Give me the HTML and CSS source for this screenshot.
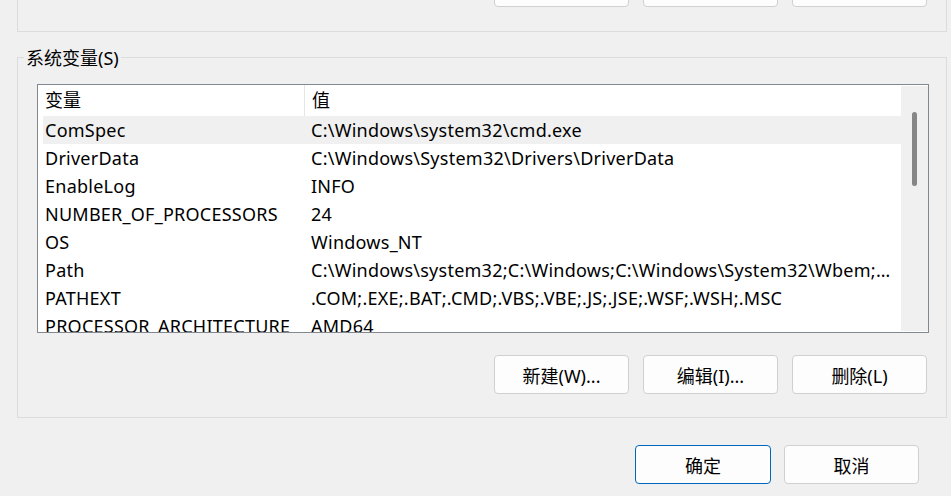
FILE: index.html
```html
<!DOCTYPE html>
<html lang="zh-CN">
<head>
    <meta charset="UTF-8">
    <title>环境变量</title>
    <link rel="stylesheet" href="styles.css">
</head>
<body>
    <div class="group group-user">
        <div class="group-buttons">
            <button class="btn">新建(N)...</button>
            <button class="btn">编辑(E)...</button>
            <button class="btn">删除(D)</button>
        </div>
    </div>

    <div class="group group-system">
        <div class="legend">系统变量(S)</div>
        <div class="listview">
            <div class="list-body">
                <div class="list-header">
                    <div class="col col-name">变量</div>
                    <div class="col col-value">值</div>
                </div>
                <div class="row selected">
                    <div class="cell cell-name">ComSpec</div>
                    <div class="cell cell-value">C:\Windows\system32\cmd.exe</div>
                </div>
                <div class="row">
                    <div class="cell cell-name">DriverData</div>
                    <div class="cell cell-value">C:\Windows\System32\Drivers\DriverData</div>
                </div>
                <div class="row">
                    <div class="cell cell-name">EnableLog</div>
                    <div class="cell cell-value">INFO</div>
                </div>
                <div class="row">
                    <div class="cell cell-name">NUMBER_OF_PROCESSORS</div>
                    <div class="cell cell-value">24</div>
                </div>
                <div class="row">
                    <div class="cell cell-name">OS</div>
                    <div class="cell cell-value">Windows_NT</div>
                </div>
                <div class="row">
                    <div class="cell cell-name">Path</div>
                    <div class="cell cell-value">C:\Windows\system32;C:\Windows;C:\Windows\System32\Wbem;C:\Windows\System32\WindowsPowerShell\v1.0\</div>
                </div>
                <div class="row">
                    <div class="cell cell-name">PATHEXT</div>
                    <div class="cell cell-value">.COM;.EXE;.BAT;.CMD;.VBS;.VBE;.JS;.JSE;.WSF;.WSH;.MSC</div>
                </div>
                <div class="row">
                    <div class="cell cell-name">PROCESSOR_ARCHITECTURE</div>
                    <div class="cell cell-value">AMD64</div>
                </div>
            </div>
            <div class="scrollbar">
                <div class="thumb"></div>
            </div>
        </div>
        <div class="group-buttons">
            <button class="btn">新建(W)...</button>
            <button class="btn">编辑(I)...</button>
            <button class="btn">删除(L)</button>
        </div>
    </div>

    <div class="dialog-buttons">
        <button class="btn btn-default">确定</button>
        <button class="btn">取消</button>
    </div>
</body>
</html>
```

FILE: styles.css
```css
body {
    margin: 0;
    background-color: #f0f0f0;
    font-family: "Noto Sans", "Noto Sans CJK SC", sans-serif;
    font-size: 18px;
    color: #000;
    overflow: hidden;
}

.group {
    margin: 0 4px 0 17px;
    border: 1px solid #dcdcdc;
    padding: 0 17px 23px 19px;
}

.group-user {
    margin-top: -32px;
    border-top: none;
    padding-bottom: 24px;
}

.group-system {
    margin-top: 25px;
}

.legend {
    display: table;
    margin: -11px 0 0 -13px;
    padding: 0 2px;
    height: 22px;
    line-height: 22px;
    background-color: #f0f0f0;
}

/* list view */

.listview {
    display: flex;
    margin-top: 15px;
    height: 247px;
    border: 1px solid #828790;
    background-color: #fff;
}

.list-body {
    flex: 1;
    overflow: hidden;
}

.list-header {
    display: flex;
    height: 31px;
    line-height: 31px;
}

.col {
    padding-left: 7px;
}

.col-name {
    width: 259px;
    border-right: 1px solid #e5e5e5;
}

.row {
    display: flex;
    margin-left: 5px;
    height: 28px;
    line-height: 28px;
    letter-spacing: 0.25px;
}

.row.selected {
    background-color: #f0f0f0;
}

.cell {
    white-space: nowrap;
    overflow: hidden;
}

.cell-name {
    width: 266px;
    padding-left: 2px;
    flex-shrink: 0;
}

.cell-value {
    flex: 1;
    padding-right: 1px;
    text-overflow: ellipsis;
}

.scrollbar {
    width: 27px;
    margin: 1px 0;
    background-color: #f0f0f0;
    display: flex;
    justify-content: center;
}

.thumb {
    width: 5px;
    height: 74px;
    margin-top: 26px;
    border-radius: 3px;
    background-color: #868686;
}

/* buttons */

.group-buttons {
    display: flex;
    justify-content: flex-end;
    gap: 14px;
    margin-top: 22px;
    margin-right: 2px;
}

.group-user .group-buttons {
    margin-top: 0;
}

.btn {
    width: 135px;
    height: 39px;
    padding: 0;
    border: 1px solid #d0d0d0;
    border-radius: 4px;
    background-color: #fdfdfd;
    font-family: inherit;
    font-size: 18px;
    color: #000;
}

.dialog-buttons {
    display: flex;
    justify-content: flex-end;
    gap: 13px;
    margin: 27px 32px 0 0;
}

.btn-default {
    width: 136px;
    border-color: #0067c0;
}
```
